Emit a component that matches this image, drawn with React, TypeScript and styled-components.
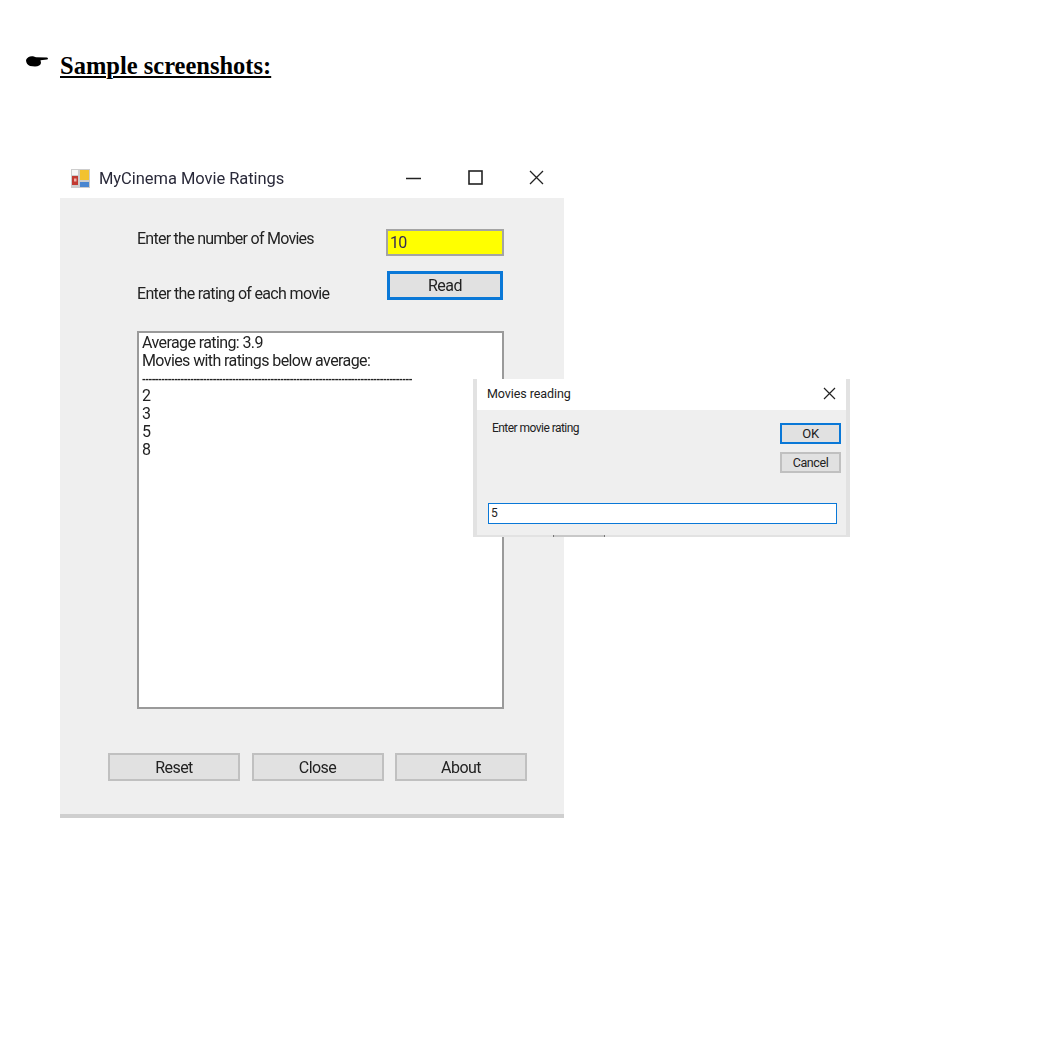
import styled, { createGlobalStyle } from "styled-components";

const RATINGS = ["2", "3", "5", "8"];

const GlobalStyle = createGlobalStyle`
  html, body {
    margin: 0;
    background: #ffffff;
  }
  #root {
    height: 1048px;
    overflow: hidden;
  }
`;

const Page = styled.div`
  padding: 52px 0 0 26px;
  color: #000;
`;

const Heading = styled.div`
  display: flex;
  align-items: center;
  gap: 12px;
  height: 27px;
`;

const HeadingText = styled.h2`
  margin: 0;
  font: bold 24.5px/27px "Liberation Serif", serif;
  text-decoration: underline;
  text-decoration-thickness: 2px;
  text-underline-offset: 2px;
`;

const HandIcon = styled.svg`
  width: 22px;
  height: 12px;
  margin-bottom: 9px;
`;

const AppWindow = styled.div`
  position: relative;
  width: 504px;
  margin: 79px 0 0 34px;
  font-family: Roboto, "Noto Sans", sans-serif;
  color: #222;
  filter: blur(0.3px);
`;

const TitleBar = styled.div`
  display: flex;
  align-items: center;
  height: 40px;
  padding: 0 20px 0 11px;
`;

const AppIcon = styled.svg`
  width: 19px;
  height: 19px;
  margin-right: 9px;
`;

const Title = styled.span`
  flex: 1;
  font-size: 16.5px;
  letter-spacing: -0.05px;
  color: #2a2a3a;
`;

const CaptionGroup = styled.div`
  display: flex;
  gap: 46.5px;
  margin-bottom: 2px;
`;

const CaptionIcon = styled.svg`
  display: block;
  width: 15px;
  height: 15px;
  fill: none;
  stroke: #222;
`;

const Body = styled.div`
  height: 620px;
  box-sizing: border-box;
  padding: 31px 37px 0 48px;
  background: #efefef;
  border-bottom: 4px solid #cfcfcf;
`;

const FormGrid = styled.div`
  display: grid;
  grid-template-columns: 249px 118px;
  grid-template-rows: 27px 29px;
  row-gap: 15px;
  margin-left: 29px;
`;

const FieldLabel = styled.span<{ $shift: number; $spacing: number }>`
  font-size: 16px;
  letter-spacing: ${(p) => p.$spacing}px;
  line-height: 20px;
  margin-top: ${(p) => p.$shift}px;
`;

const NumberInput = styled.div`
  box-sizing: border-box;
  border: 2px solid #a4a4a4;
  background: #ffff00;
  padding-left: 2px;
  font-size: 16px;
  line-height: 23px;
  letter-spacing: -0.8px;
  color: #332a55;
`;

const PushButton = styled.button<{ $focused?: boolean }>`
  box-sizing: border-box;
  padding: 0;
  background: #e1e1e1;
  border: ${(p) => (p.$focused ? "2px solid #0a78d7" : "2px solid #c0c0c0")};
  font-family: inherit;
  font-size: 16px;
  letter-spacing: -0.55px;
  color: #222;
`;

const ReadButton = styled(PushButton)`
  width: 116px;
  height: 29px;
  margin-left: 1px;
  border-width: 3px;
`;

const ListBox = styled.div`
  box-sizing: border-box;
  width: 367px;
  height: 378px;
  margin: 31px 0 0 29px;
  padding: 1px 3px;
  background: #fff;
  border: 2px solid #9a9a9a;
  font-size: 16px;
  line-height: 17.8px;
  letter-spacing: -0.6px;
`;

const Separator = styled.div`
  white-space: nowrap;
  font-family: "Liberation Sans", sans-serif;
  font-size: 11px;
  font-weight: bold;
  letter-spacing: -0.45px;
`;

const ActionRow = styled.div`
  display: grid;
  grid-template-columns: repeat(3, 132px);
  column-gap: 11.5px;
  height: 28px;
  margin-top: 44px;
`;

const Dialog = styled.div`
  position: absolute;
  left: 413px;
  top: 221px;
  box-sizing: border-box;
  width: 377px;
  height: 158px;
  background: #fff;
  border: solid #e2e2e2;
  border-width: 0 4px 2px 4px;

  /* bits of the window behind that show below the dialog */
  &::after {
    content: "";
    position: absolute;
    left: 76px;
    bottom: -2px;
    width: 50px;
    height: 2px;
    background: #c8c8c8;
    border: solid #777;
    border-width: 0 1px;
  }
`;

const DialogTitleBar = styled.div`
  display: flex;
  align-items: center;
  justify-content: space-between;
  height: 31px;
  padding: 0 9px 2px 10px;
  box-sizing: border-box;
  font-size: 12.5px;
  letter-spacing: -0.08px;
`;

const DialogBody = styled.div`
  display: grid;
  grid-template-columns: 1fr 61px;
  grid-template-rows: 21px 21px;
  row-gap: 8px;
  height: 125px;
  box-sizing: border-box;
  padding: 13px 5px 0 15px;
  background: #efefef;
`;

const DialogLabel = styled.span`
  font-size: 12px;
  letter-spacing: -0.54px;
  line-height: 10px;
`;

const DialogButton = styled(PushButton)<{ $large?: boolean }>`
  font-size: ${(p) => (p.$large ? "13px" : "12.5px")};
  letter-spacing: -0.4px;
  width: 61px;
  height: 21px;
`;

const DialogInput = styled.div`
  grid-column: 1 / -1;
  box-sizing: border-box;
  height: 21px;
  margin: 22px 4px 0 -4px;
  padding-left: 2px;
  border: 1px solid #0a78d7;
  background: #fff;
  font-size: 12px;
  line-height: 19px;
`;

const App = () => {
  return (
    <>
      <GlobalStyle />
      <Page>
        <Heading>
          <HandIcon viewBox="0 0 22 12">
            <path
              d="M0 5C1 2 4 .8 7 1.2L10 2.2 21 2.4C22.3 2.6 22.3 4.4 21 4.6L14.5 5.2 15 8C14.6 10 12.5 11.6 9 11.6L4 11C1.5 10 0 8 0 5Z"
              fill="#000"
            />
          </HandIcon>
          <HeadingText>Sample screenshots:</HeadingText>
        </Heading>

        <AppWindow>
          <TitleBar>
            <AppIcon viewBox="0 0 19 19">
              <rect x="0" y="0" width="19" height="19" fill="#cdcdcd" />
              <rect x="1" y="1" width="6" height="5" fill="#f6f6f6" />
              <rect x="1" y="7" width="6" height="9" fill="#c23a32" />
              <rect x="3" y="9.5" width="2.5" height="3" fill="#eeb0a8" />
              <rect x="9" y="1" width="9" height="10" fill="#f2c230" />
              <rect x="9" y="13" width="9" height="5" fill="#4a86d0" />
            </AppIcon>
            <Title>MyCinema Movie Ratings</Title>
            <CaptionGroup>
              <CaptionIcon viewBox="0 0 15 15" strokeWidth={1.5}>
                <path d="M0 8.5H15" />
              </CaptionIcon>
              <CaptionIcon viewBox="0 0 15 15" strokeWidth={1.6}>
                <rect x="1" y="1" width="13" height="13" />
              </CaptionIcon>
              <CaptionIcon viewBox="0 0 15 15" strokeWidth={1.3}>
                <path d="M1 1L14 14M14 1L1 14" />
              </CaptionIcon>
            </CaptionGroup>
          </TitleBar>

          <Body>
            <FormGrid>
              <FieldLabel $shift={0} $spacing={-0.74}>
                Enter the number of Movies
              </FieldLabel>
              <NumberInput>10</NumberInput>
              <FieldLabel $shift={13} $spacing={-0.67}>
                Enter the rating of each movie
              </FieldLabel>
              <ReadButton $focused>Read</ReadButton>
            </FormGrid>

            <ListBox>
              <div>Average rating: 3.9</div>
              <div>Movies with ratings below average:</div>
              <Separator>{"-".repeat(84)}</Separator>
              {RATINGS.map((rating) => (
                <div key={rating}>{rating}</div>
              ))}
            </ListBox>

            <ActionRow>
              <PushButton>Reset</PushButton>
              <PushButton>Close</PushButton>
              <PushButton>About</PushButton>
            </ActionRow>
          </Body>

          <Dialog>
            <DialogTitleBar>
              <span>Movies reading</span>
              <CaptionIcon viewBox="0 0 15 15" strokeWidth={1.2}>
                <path d="M2 2L13 13M13 2L2 13" />
              </CaptionIcon>
            </DialogTitleBar>
            <DialogBody>
              <DialogLabel>Enter movie rating</DialogLabel>
              <DialogButton $focused $large>
                OK
              </DialogButton>
              <span />
              <DialogButton>Cancel</DialogButton>
              <DialogInput>5</DialogInput>
            </DialogBody>
          </Dialog>
        </AppWindow>
      </Page>
    </>
  );
};

export default App;
